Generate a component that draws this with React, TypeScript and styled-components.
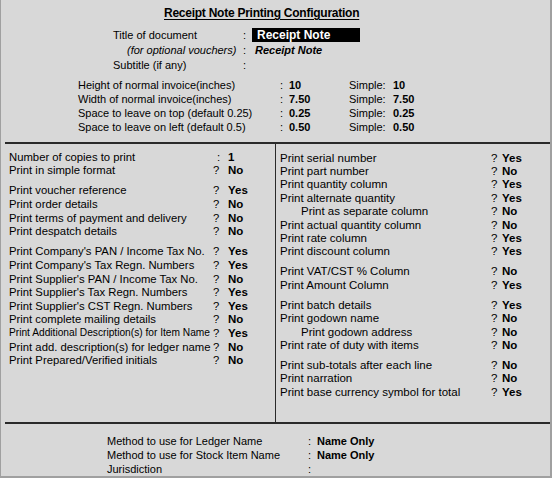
import * as React from 'react';
import styled, { createGlobalStyle } from 'styled-components';

const GlobalStyle = createGlobalStyle`
    html, body {
        margin: 0;
        padding: 0;
        background: #d8d8d8;
    }
    * {
        box-sizing: border-box;
    }
`

const Frame = styled('div')({
    width: '552px',
    height: '478px',
    backgroundColor: '#d8d8d8',
    borderLeft: '1px solid #a0a0a0',
    borderRight: '2px solid #a0a0a0',
    borderBottom: '2px solid #a0a0a0',
    fontFamily: '"Liberation Sans", Arial, sans-serif',
    fontSize: '11px',
    color: '#000',
    paddingTop: '5px',
    display: 'flex',
    flexDirection: 'column',
    overflow: 'hidden'
})

const Title = styled('div')({
    marginLeft: '163px',
    fontSize: '12px',
    letterSpacing: '-0.25px',
    lineHeight: '16px',
    fontWeight: 'bold',
    textDecoration: 'underline',
    textUnderlineOffset: '2px'
})

const HeadGrid = styled('div')({
    marginTop: '6px',
    marginLeft: '112px',
    display: 'grid',
    gridTemplateColumns: '130px 9px auto',
    gridAutoRows: '15px',
    alignItems: 'center'
})

const DimGrid = styled('div')({
    marginTop: '6px',
    marginLeft: '77px',
    display: 'grid',
    gridTemplateColumns: '202px 9px 60px 44px auto',
    gridAutoRows: '14px',
    alignItems: 'center'
})

const Label = styled('span')<{ $indent?: number; $italic?: boolean }>(p => ({
    paddingLeft: `${p.$indent || 0}px`,
    fontStyle: p.$italic ? 'italic' : 'normal',
    whiteSpace: 'nowrap'
}))

const Colon = styled('span')({
    whiteSpace: 'nowrap'
})

const Value = styled('span')<{ $italic?: boolean; $pad?: number }>(p => ({
    fontWeight: 'bold',
    fontStyle: p.$italic ? 'italic' : 'normal',
    paddingLeft: `${p.$pad || 0}px`,
    whiteSpace: 'nowrap'
}))

const Highlight = styled('span')({
    backgroundColor: '#000',
    color: '#fff',
    fontWeight: 'bold',
    width: '108px',
    height: '14px',
    lineHeight: '14px',
    paddingLeft: '5px',
    fontSize: '12px'
})

const Main = styled('div')({
    marginTop: '8px',
    marginLeft: '4px',
    height: '283px',
    borderTop: '2px solid #2a2a2a',
    borderBottom: '2px solid #2a2a2a',
    display: 'grid',
    gridTemplateColumns: '271px 1fr'
})

const Column = styled('div')<{ $divider?: boolean; $top: number; $gap: number; $size: number }>(p => ({
    borderRight: p.$divider ? '1px solid #2a2a2a' : 'none',
    paddingTop: `${p.$top}px`,
    paddingLeft: '4px',
    fontSize: `${p.$size}px`,
    display: 'flex',
    flexDirection: 'column',
    gap: `${p.$gap}px`
}))

const Group = styled('div')<{ $labelWidth: number; $markWidth: number; $pitch: number }>(p => ({
    display: 'grid',
    gridTemplateColumns: `${p.$labelWidth}px ${p.$markWidth}px auto`,
    gridAutoRows: `${p.$pitch}px`,
    alignItems: 'center'
}))

const RowLabel = styled('span')<{ $indent?: boolean; $tight?: boolean }>(p => ({
    paddingLeft: p.$indent ? '21px' : '0px',
    whiteSpace: 'nowrap',
    fontSize: p.$tight ? '10.2px' : 'inherit'
}))

const Mark = styled('span')<{ $colon?: boolean }>(p => ({
    paddingLeft: p.$colon ? '5px' : '1px'
}))

const RowValue = styled('span')({
    fontWeight: 'bold',
    fontSize: '11.5px',
    paddingLeft: '1px'
})

const Footer = styled('div')({
    marginTop: '9px',
    marginLeft: '106px',
    display: 'grid',
    gridTemplateColumns: '201px 9px auto',
    gridAutoRows: '14.2px',
    alignItems: 'center'
})

type Row = {
    label: string
    value: string
    colon?: boolean
    indent?: boolean
    tight?: boolean
}

const leftGroups: Row[][] = [
    [
        { label: 'Number of copies to print', value: '1', colon: true },
        { label: 'Print in simple format', value: 'No' }
    ],
    [
        { label: 'Print voucher reference', value: 'Yes' },
        { label: 'Print order details', value: 'No' },
        { label: 'Print terms of payment and delivery', value: 'No' },
        { label: 'Print despatch details', value: 'No' }
    ],
    [
        { label: "Print Company's PAN / Income Tax No.", value: 'Yes' },
        { label: "Print Company's Tax Regn. Numbers", value: 'Yes' },
        { label: "Print Supplier's PAN / Income Tax No.", value: 'No' },
        { label: "Print Supplier's Tax Regn. Numbers", value: 'Yes' },
        { label: "Print Supplier's CST Regn. Numbers", value: 'Yes' },
        { label: 'Print complete mailing details', value: 'No' },
        { label: 'Print Additional Description(s) for Item Name', value: 'Yes', tight: true },
        { label: 'Print add. description(s) for ledger name', value: 'No' },
        { label: 'Print Prepared/Verified initials', value: 'No' }
    ]
]

const rightGroups: Row[][] = [
    [
        { label: 'Print serial number', value: 'Yes' },
        { label: 'Print part number', value: 'No' },
        { label: 'Print quantity column', value: 'Yes' },
        { label: 'Print alternate quantity', value: 'Yes' },
        { label: 'Print as separate column', value: 'No', indent: true },
        { label: 'Print actual quantity column', value: 'No' },
        { label: 'Print rate column', value: 'Yes' },
        { label: 'Print discount column', value: 'Yes' }
    ],
    [
        { label: 'Print VAT/CST % Column', value: 'No' },
        { label: 'Print Amount Column', value: 'Yes' }
    ],
    [
        { label: 'Print batch details', value: 'Yes' },
        { label: 'Print godown name', value: 'No' },
        { label: 'Print godown address', value: 'No', indent: true },
        { label: 'Print rate of duty with items', value: 'No' }
    ],
    [
        { label: 'Print sub-totals after each line', value: 'No' },
        { label: 'Print narration', value: 'No' },
        { label: 'Print base currency symbol for total', value: 'Yes' }
    ]
]

const dims = [
    { label: 'Height of normal invoice(inches)', value: '10', simple: '10' },
    { label: 'Width of normal invoice(inches)', value: '7.50', simple: '7.50' },
    { label: 'Space to leave on top (default 0.25)', value: '0.25', simple: '0.25' },
    { label: 'Space to leave on left (default 0.5)', value: '0.50', simple: '0.50' }
]

type OptionColumnProps = {
    groups: Row[][]
    labelWidth: number
    markWidth: number
    top: number
    pitch: number
    gap: number
    size: number
    divider?: boolean
}

const OptionColumn = ({ groups, labelWidth, markWidth, top, pitch, gap, size, divider }: OptionColumnProps) => (
    <Column $divider={divider} $top={top} $gap={gap} $size={size}>
        {groups.map((group, g) =>
            <Group key={`g-${g}`} $labelWidth={labelWidth} $markWidth={markWidth} $pitch={pitch}>
                {group.map((row, i) =>
                    <React.Fragment key={`r-${i}`}>
                        <RowLabel $indent={row.indent} $tight={row.tight}>{row.label}</RowLabel>
                        <Mark $colon={row.colon}>{row.colon ? ':' : '?'}</Mark>
                        <RowValue>{row.value}</RowValue>
                    </React.Fragment>
                )}
            </Group>
        )}
    </Column>
)

export default function App() {
    return (
        <React.Fragment>
            <GlobalStyle />
            <Frame>
                <Title>Receipt Note Printing Configuration</Title>
                <HeadGrid>
                    <Label>Title of document</Label>
                    <Colon>:</Colon>
                    <Highlight>Receipt Note</Highlight>
                    <Label $indent={14} $italic>(for optional vouchers)</Label>
                    <Colon>:</Colon>
                    <Value $italic $pad={3}>Receipt Note</Value>
                    <Label>Subtitle (if any)</Label>
                    <Colon>:</Colon>
                    <span />
                </HeadGrid>
                <DimGrid>
                    {dims.map((d, i) =>
                        <React.Fragment key={`d-${i}`}>
                            <Label>{d.label}</Label>
                            <Colon>:</Colon>
                            <Value>{d.value}</Value>
                            <Label>Simple:</Label>
                            <Value>{d.simple}</Value>
                        </React.Fragment>
                    )}
                </DimGrid>
                <Main>
                    <OptionColumn groups={leftGroups} labelWidth={203} markWidth={15} top={6}
                        pitch={13.6} gap={6.5} size={11.3} divider />
                    <OptionColumn groups={rightGroups} labelWidth={210} markWidth={11} top={7}
                        pitch={13.4} gap={6.6} size={11.5} />
                </Main>
                <Footer>
                    <Label>Method to use for Ledger Name</Label>
                    <Colon>:</Colon>
                    <Value>Name Only</Value>
                    <Label>Method to use for Stock Item Name</Label>
                    <Colon>:</Colon>
                    <Value>Name Only</Value>
                    <Label>Jurisdiction</Label>
                    <Colon>:</Colon>
                    <span />
                </Footer>
            </Frame>
        </React.Fragment>
    )
}
